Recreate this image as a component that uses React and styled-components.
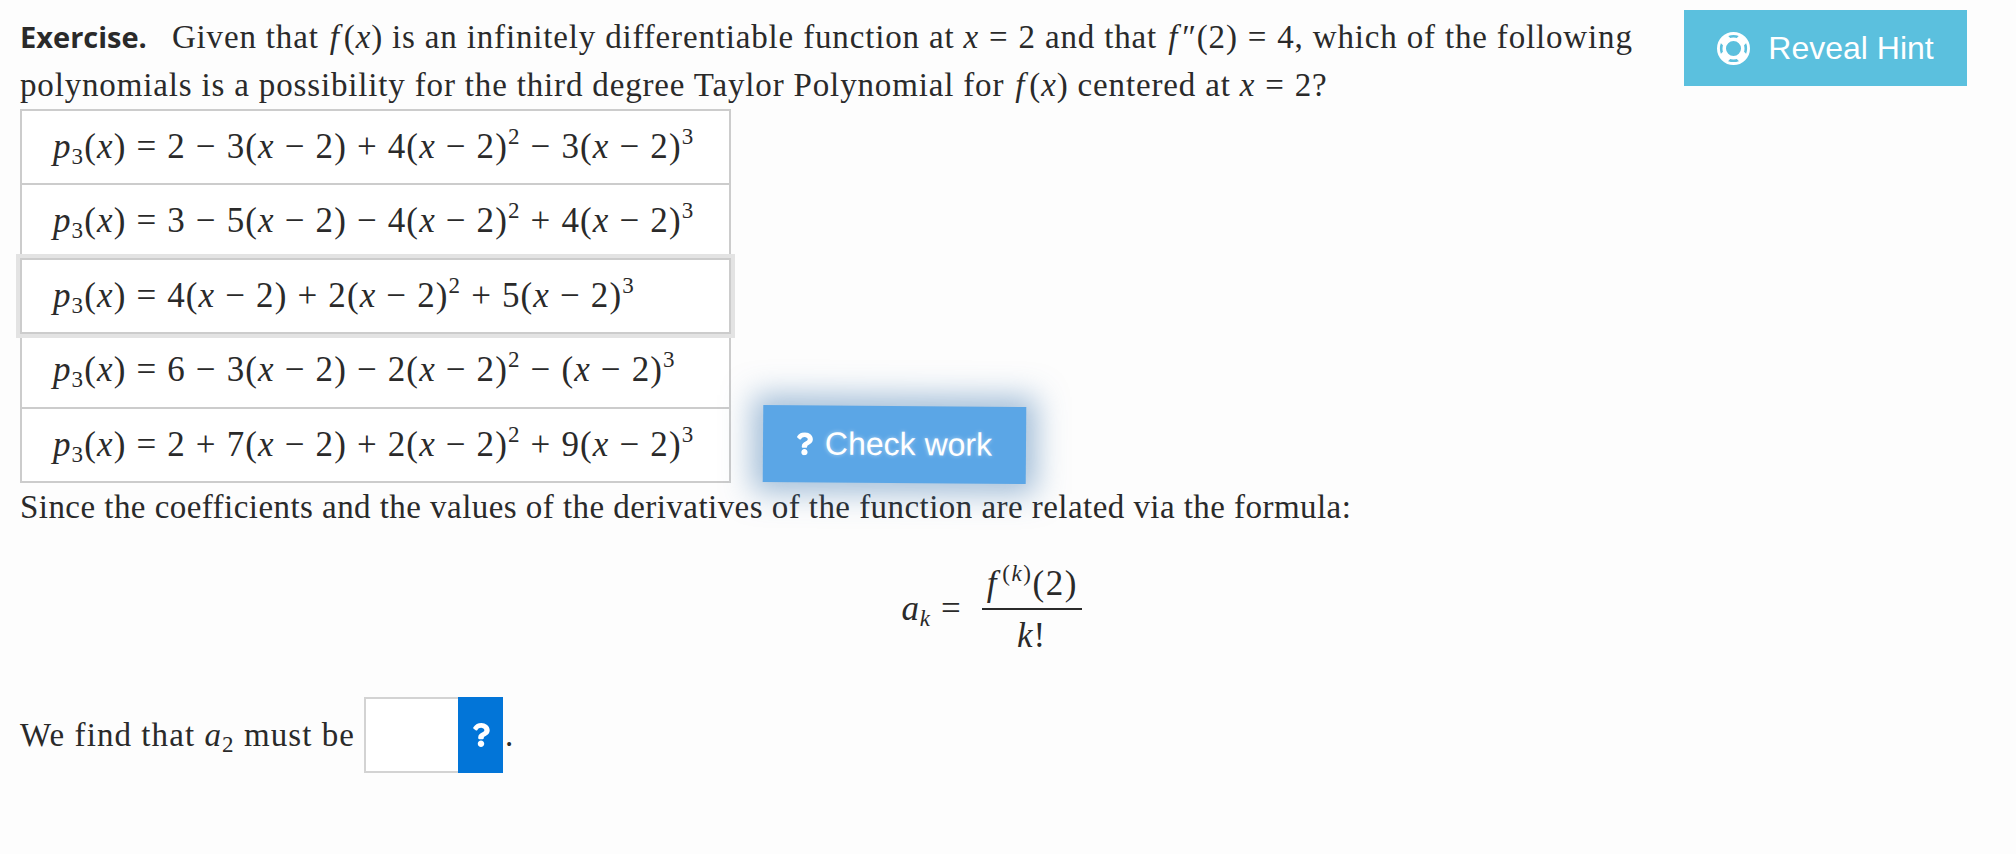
import React from "react";
import styled, { createGlobalStyle } from "styled-components";
import { FaQuestion } from "react-icons/fa";

const GlobalStyle = createGlobalStyle`
    html, body {
        margin: 0;
        background: #fdfdfd;
    }
`

const Page = styled.div`
    height: 854px;
    box-sizing: border-box;
    padding: 10px 49px 0 20px;
    overflow: hidden;
    color: #2a2a2a;
    font-family: "Liberation Serif", serif;
    font-size: 33px;
    line-height: 48px;
    letter-spacing: 0.84px;
`

const HintButton = styled.button`
    float: right;
    width: 283px;
    height: 76px;
    display: flex;
    align-items: center;
    justify-content: center;
    gap: 18px;
    padding: 0;
    border: none;
    background: #5bc0de;
    color: #fff;
    font-family: "Liberation Sans", sans-serif;
    font-size: 32px;
`

const Intro = styled.div`
    padding-top: 3px;
`

const Line = styled.div`
    white-space: nowrap;
`

const Since = styled(Line)`
    letter-spacing: 0.45px;
`

const Label = styled.strong`
    font-family: "Open Sans", sans-serif;
    font-size: 29px;
    letter-spacing: 0;
    margin-right: 25px;
`

const Var = styled.i`
    font-style: italic;
    margin-right: ${props => (props.$slanted ? "4px" : "0")};
    margin-left: ${props => (props.$slanted ? "2px" : "0")};
`

const Sup = styled.sup`
    font-size: 23px;
    line-height: 0;
    vertical-align: 14px;
`

const Sub = styled.sub`
    font-size: 23px;
    line-height: 0;
    vertical-align: -6px;
`

const Op = styled.span`
    margin: 0 10px;
`

const Choices = styled.div`
    display: flex;
    align-items: flex-end;
    gap: 32px;
`

const Table = styled.div`
    width: 711px;
    flex: none;
`

const Choice = styled.div`
    position: relative;
    height: 76.4px;
    box-sizing: border-box;
    padding-left: 31px;
    border: 2px solid #ccc;
    background: #fff;
    white-space: nowrap;
    font-size: 35px;
    line-height: 72px;
    letter-spacing: 1.1px;
    z-index: ${props => (props.$selected ? 1 : 0)};
    box-shadow: ${props => (props.$selected ? "0 0 0 4px #e3e3e3" : "none")};

    & + & {
        margin-top: -2px;
    }
`

const CheckButton = styled.button`
    width: 263px;
    height: 77px;
    display: flex;
    align-items: center;
    justify-content: center;
    gap: 9px;
    padding: 0 4px 0 0;
    border: none;
    background: #5ba6e6;
    color: #fff;
    font-family: "Liberation Sans", sans-serif;
    font-size: 32px;
    text-shadow: 0 0 4px rgba(255, 255, 255, 0.5);
    transform: rotate(0.43deg);
    box-shadow: 0 0 30px 10px rgba(70, 125, 180, 0.5);
`

const Display = styled.div`
    display: flex;
    align-items: center;
    justify-content: center;
    height: 100px;
    margin-top: 28px;
    padding-right: 4px;
    font-size: 35px;
    white-space: nowrap;
`

const Fraction = styled.span`
    display: inline-flex;
    flex-direction: column;
    align-items: stretch;
    width: 100px;
    margin-left: 10px;
    text-align: center;
`

const Numerator = styled.span`
    height: 49px;
    border-bottom: 2px solid #2a2a2a;
    line-height: 50px;
    letter-spacing: 1.6px;
    white-space: nowrap;
`

const Denominator = styled.span`
    height: 49px;
    line-height: 52px;
`

const AnswerRow = styled.div`
    display: flex;
    align-items: center;
    height: 76px;
    margin-top: 38px;
    white-space: nowrap;
    letter-spacing: 1.07px;
`

const AnswerInput = styled.input`
    width: 94px;
    height: 76px;
    box-sizing: border-box;
    margin-left: 9px;
    border: 2px solid #d3d3d3;
    border-right: none;
    background: #fff;
    outline: none;
`

const InputHelp = styled.button`
    width: 45px;
    height: 76px;
    display: flex;
    align-items: center;
    justify-content: center;
    margin-right: 2px;
    padding: 0;
    border: none;
    background: #0275d8;
    color: #fff;
    font-size: 24px;
`

const LifeRing = () => (
    <svg width="33" height="33" viewBox="0 0 32 32" fill="none" stroke="#fff">
        <circle cx="16" cy="16" r="14.6" strokeWidth="2.8" />
        <circle cx="16" cy="16" r="9" strokeWidth="3.4" />
        <path
            d="M9.5 9.5L6 6M22.5 9.5L26 6M9.5 22.5L6 26M22.5 22.5L26 26"
            strokeWidth="10"
        />
    </svg>
)

const Diff = () => <>(<Var>x</Var><Op>−</Op>2)</>

const Poly = ({ children }) => (
    <>
        <Var>p</Var><Sub>3</Sub>(<Var>x</Var>)<Op>=</Op>{children}
    </>
)

const Square = () => <><Diff /><Sup>2</Sup></>
const Cube = () => <><Diff /><Sup>3</Sup></>

export default function App() {
    return (
        <Page>
            <GlobalStyle />
            <HintButton>
                <LifeRing />
                Reveal Hint
            </HintButton>
            <Intro>
                <Line>
                    <Label>Exercise.</Label>
                    Given that <Var $slanted>f</Var>(<Var>x</Var>) is an infinitely differentiable function at <Var>x</Var><Op>=</Op>2 and that <Var $slanted>f</Var>″(2)<Op>=</Op>4, which of the following
                </Line>
                <Line>
                    polynomials is a possibility for the third degree Taylor Polynomial for <Var $slanted>f</Var>(<Var>x</Var>) centered at <Var>x</Var><Op>=</Op>2?
                </Line>
            </Intro>
            <Choices>
                <Table>
                    <Choice><Poly>2<Op>−</Op>3<Diff /><Op>+</Op>4<Square /><Op>−</Op>3<Cube /></Poly></Choice>
                    <Choice><Poly>3<Op>−</Op>5<Diff /><Op>−</Op>4<Square /><Op>+</Op>4<Cube /></Poly></Choice>
                    <Choice $selected><Poly>4<Diff /><Op>+</Op>2<Square /><Op>+</Op>5<Cube /></Poly></Choice>
                    <Choice><Poly>6<Op>−</Op>3<Diff /><Op>−</Op>2<Square /><Op>−</Op><Cube /></Poly></Choice>
                    <Choice><Poly>2<Op>+</Op>7<Diff /><Op>+</Op>2<Square /><Op>+</Op>9<Cube /></Poly></Choice>
                </Table>
                <CheckButton>
                    <FaQuestion size={23} />
                    Check work
                </CheckButton>
            </Choices>
            <Since>Since the coefficients and the values of the derivatives of the function are related via the formula:</Since>
            <Display>
                <span><Var>a</Var><Sub><Var>k</Var></Sub><Op>=</Op></span>
                <Fraction>
                    <Numerator><Var $slanted>f</Var><Sup>(<Var>k</Var>)</Sup>(2)</Numerator>
                    <Denominator><Var>k</Var>!</Denominator>
                </Fraction>
            </Display>
            <AnswerRow>
                <span>We find that <Var>a</Var><Sub>2</Sub> must be</span>
                <AnswerInput />
                <InputHelp><FaQuestion /></InputHelp>
                <span>.</span>
            </AnswerRow>
        </Page>
    );
}
